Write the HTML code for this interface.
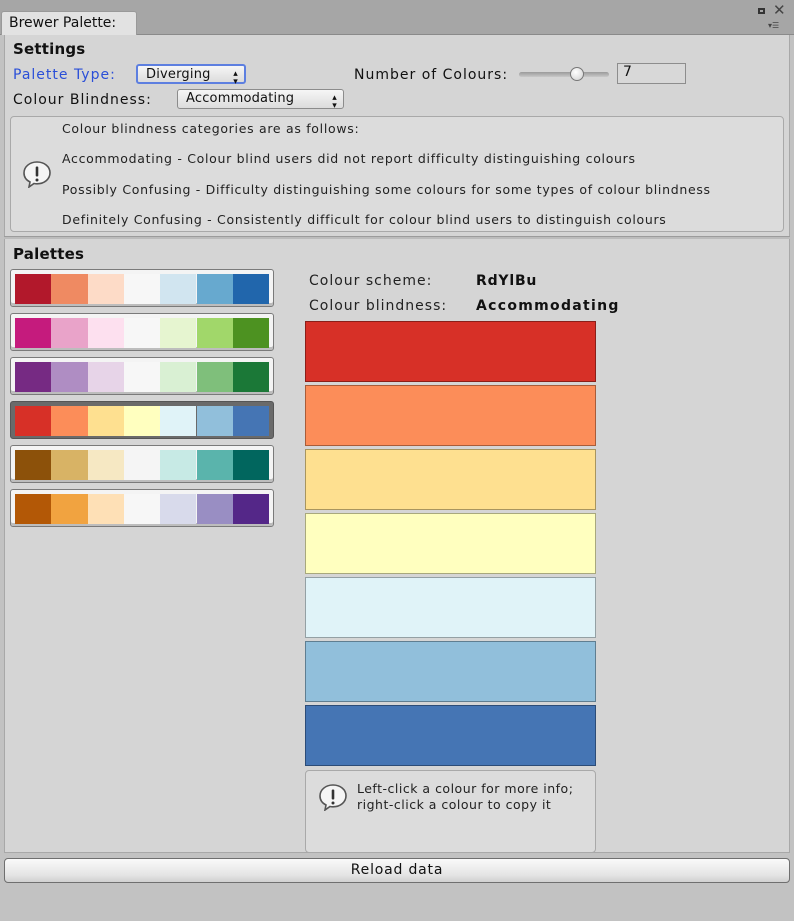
<!DOCTYPE html>
<html><head><meta charset="utf-8"><style>
*{margin:0;padding:0;box-sizing:border-box}
body{width:794px;height:921px;background:#c2c2c2;position:relative;overflow:hidden;font-family:"DejaVu Sans","Liberation Sans",sans-serif;color:#111}
.a{position:absolute}
.top{left:0;top:0;width:794px;height:35px;background:#a6a6a6;border-bottom:1px solid #8a8a8a}
.tab{left:1px;top:11px;width:136px;height:24px;background:#e2e2e2;border:1px solid #999;border-bottom:none;border-radius:3px 3px 0 0;font-size:14px;padding:3px 0 0 7px;font-family:"DejaVu Sans",sans-serif}
.panel{left:4px;top:35px;width:786px;height:818px;background:#d5d5d5;border:1px solid #a8a8a8;border-top:none}
.t{font-size:14px;white-space:nowrap;letter-spacing:1px}
.b{font-weight:bold}
.dd{background:linear-gradient(#f6f6f6,#dcdcdc);border:1px solid #8c8c8c;border-radius:3px;font-size:13px;padding:1px 0 0 8px;letter-spacing:0.2px}
.arr{position:absolute;right:6px;top:0px;font-size:9px;line-height:8px;top:4px}
.help{background:#dcdcdc;border:1px solid #a9a9a9;border-radius:4px}
.ht{font-size:12.5px;color:#222;white-space:nowrap;letter-spacing:0.7px}
.row{left:10px;width:264px;height:38px;background:#f4f4f4;border:1px solid #7a7a7a;border-radius:3px;box-shadow:inset 0 -3px 0 #bdbdbd}
.row.sel{background:#6a6a6a;border:1px solid #555;box-shadow:none}
.row div{position:absolute;top:4px;height:30px;width:36.3px}
.sw{left:305px;width:291px;height:61px;border:1px solid}
.sep{left:4px;width:786px;height:3px;background:#bcbcbc;border-top:1px solid #9c9c9c}
</style></head><body>
<div class="a top"></div>
<div class="a tab">Brewer Palette:</div>
<div class="a" style="left:758px;top:8px;width:7px;height:6px;border:2px solid #333"></div>
<div class="a" style="left:773px;top:1px;font-size:15px;color:#444">✕</div>
<div class="a" style="left:768px;top:21px;font-size:8px;color:#444">▾☰</div>
<div class="a panel"></div>

<div class="a t b" style="left:13px;top:40px;font-size:15px;letter-spacing:0.2px">Settings</div>
<div class="a t" style="left:13px;top:67px;color:#2a4fd8">Palette Type:</div>
<div class="a dd" style="left:136px;top:64px;width:110px;height:20px;border:2px solid #5d7fe0">Diverging<span class="arr">▴<br>▾</span></div>
<div class="a t" style="left:354px;top:67px">Number of Colours:</div>
<div class="a" style="left:519px;top:72px;width:90px;height:5px;background:linear-gradient(#9a9a9a,#c8c8c8);border-radius:3px"></div>
<div class="a" style="left:570px;top:67px;width:14px;height:14px;border-radius:50%;background:radial-gradient(circle at 40% 35%,#fff,#cfcfcf);border:1px solid #777"></div>
<div class="a" style="left:617px;top:63px;width:69px;height:21px;background:#d8d8d8;border:1px solid #8d8d8d;font-size:14px;padding:0 0 0 5px">7</div>
<div class="a t" style="left:13px;top:92px">Colour Blindness:</div>
<div class="a dd" style="left:177px;top:89px;width:167px;height:20px">Accommodating<span class="arr">▴<br>▾</span></div>

<div class="a help" style="left:10px;top:116px;width:774px;height:116px"></div>
<svg class="a" style="left:22px;top:160px" width="30" height="28" viewBox="0 0 30 28"><path d="M15 2C7.5 2 2 6.8 2 13c0 4 2.4 7.2 6 9l-1 5 5-3.5c1 .2 2 .3 3 .3 7.5 0 13-4.8 13-11S22.5 2 15 2z" fill="#f5f5f5" stroke="#555" stroke-width="1.6"/><rect x="13.7" y="6.5" width="2.6" height="10" rx="1" fill="#333"/><circle cx="15" cy="20" r="1.5" fill="#333"/></svg>
<div class="a ht" style="left:62px;top:121px">Colour blindness categories are as follows:</div>
<div class="a ht" style="left:62px;top:151px">Accommodating - Colour blind users did not report difficulty distinguishing colours</div>
<div class="a ht" style="left:62px;top:182px">Possibly Confusing - Difficulty distinguishing some colours for some types of colour blindness</div>
<div class="a ht" style="left:62px;top:212px">Definitely Confusing - Consistently difficult for colour blind users to distinguish colours</div>

<div class="a sep" style="top:236px"></div>
<div class="a t b" style="left:13px;top:245px;font-size:15px;letter-spacing:0.2px">Palettes</div>

<div class="a row" style="top:269px"><div style="left:4px;background:#b2182b"></div><div style="left:40.3px;background:#ef8a62"></div><div style="left:76.6px;background:#fddbc7"></div><div style="left:112.9px;background:#f7f7f7"></div><div style="left:149.2px;background:#d1e5f0"></div><div style="left:185.5px;background:#67a9cf"></div><div style="left:221.8px;background:#2166ac"></div></div>
<div class="a row" style="top:313px"><div style="left:4px;background:#c51b7d"></div><div style="left:40.3px;background:#e9a3c9"></div><div style="left:76.6px;background:#fde0ef"></div><div style="left:112.9px;background:#f7f7f7"></div><div style="left:149.2px;background:#e6f5d0"></div><div style="left:185.5px;background:#a1d76a"></div><div style="left:221.8px;background:#4d9221"></div></div>
<div class="a row" style="top:357px"><div style="left:4px;background:#762a83"></div><div style="left:40.3px;background:#af8dc3"></div><div style="left:76.6px;background:#e7d4e8"></div><div style="left:112.9px;background:#f7f7f7"></div><div style="left:149.2px;background:#d9f0d3"></div><div style="left:185.5px;background:#7fbf7b"></div><div style="left:221.8px;background:#1b7837"></div></div>
<div class="a row sel" style="top:401px"><div style="left:4px;background:#d73027"></div><div style="left:40.3px;background:#fc8d59"></div><div style="left:76.6px;background:#fee090"></div><div style="left:112.9px;background:#ffffbf"></div><div style="left:149.2px;background:#e0f3f8"></div><div style="left:185.5px;background:#91bfdb"></div><div style="left:221.8px;background:#4575b4"></div></div>
<div class="a row" style="top:445px"><div style="left:4px;background:#8c510a"></div><div style="left:40.3px;background:#d8b365"></div><div style="left:76.6px;background:#f6e8c3"></div><div style="left:112.9px;background:#f5f5f5"></div><div style="left:149.2px;background:#c7eae5"></div><div style="left:185.5px;background:#5ab4ac"></div><div style="left:221.8px;background:#01665e"></div></div>
<div class="a row" style="top:489px"><div style="left:4px;background:#b35806"></div><div style="left:40.3px;background:#f1a340"></div><div style="left:76.6px;background:#fee0b6"></div><div style="left:112.9px;background:#f7f7f7"></div><div style="left:149.2px;background:#d8daeb"></div><div style="left:185.5px;background:#998ec3"></div><div style="left:221.8px;background:#542788"></div></div>

<div class="a t" style="left:309px;top:273px;color:#222">Colour scheme:</div>
<div class="a t b" style="left:476px;top:273px;letter-spacing:0.8px">RdYlBu</div>
<div class="a t" style="left:309px;top:298px;color:#222">Colour blindness:</div>
<div class="a t b" style="left:476px;top:298px;letter-spacing:1.3px">Accommodating</div>

<div class="a sw" style="top:321px;background:#d73027;border-color:#8a1f19"></div>
<div class="a sw" style="top:385px;background:#fc8d59;border-color:#a85c39"></div>
<div class="a sw" style="top:449px;background:#fee090;border-color:#a8955f"></div>
<div class="a sw" style="top:513px;background:#ffffbf;border-color:#a8a87d"></div>
<div class="a sw" style="top:577px;background:#e0f3f8;border-color:#94a0a4"></div>
<div class="a sw" style="top:641px;background:#91bfdb;border-color:#5f7e91"></div>
<div class="a sw" style="top:705px;background:#4575b4;border-color:#2c4c77"></div>

<div class="a help" style="left:305px;top:770px;width:291px;height:83px"></div>
<svg class="a" style="left:318px;top:783px" width="30" height="28" viewBox="0 0 30 28"><path d="M15 2C7.5 2 2 6.8 2 13c0 4 2.4 7.2 6 9l-1 5 5-3.5c1 .2 2 .3 3 .3 7.5 0 13-4.8 13-11S22.5 2 15 2z" fill="#f5f5f5" stroke="#555" stroke-width="1.6"/><rect x="13.7" y="6.5" width="2.6" height="10" rx="1" fill="#333"/><circle cx="15" cy="20" r="1.5" fill="#333"/></svg>
<div class="a ht" style="left:357px;top:781px;line-height:16px;letter-spacing:0.5px">Left-click a colour for more info;<br>right-click a colour to copy it</div>

<div class="a" style="left:4px;top:858px;width:786px;height:25px;border:1px solid #6f6f6f;border-radius:4px;background:linear-gradient(#fafafa,#e4e4e4 70%,#d0d0d0);font-size:14px;text-align:center;padding-top:3px;letter-spacing:0.8px">Reload data</div>
</body></html>
